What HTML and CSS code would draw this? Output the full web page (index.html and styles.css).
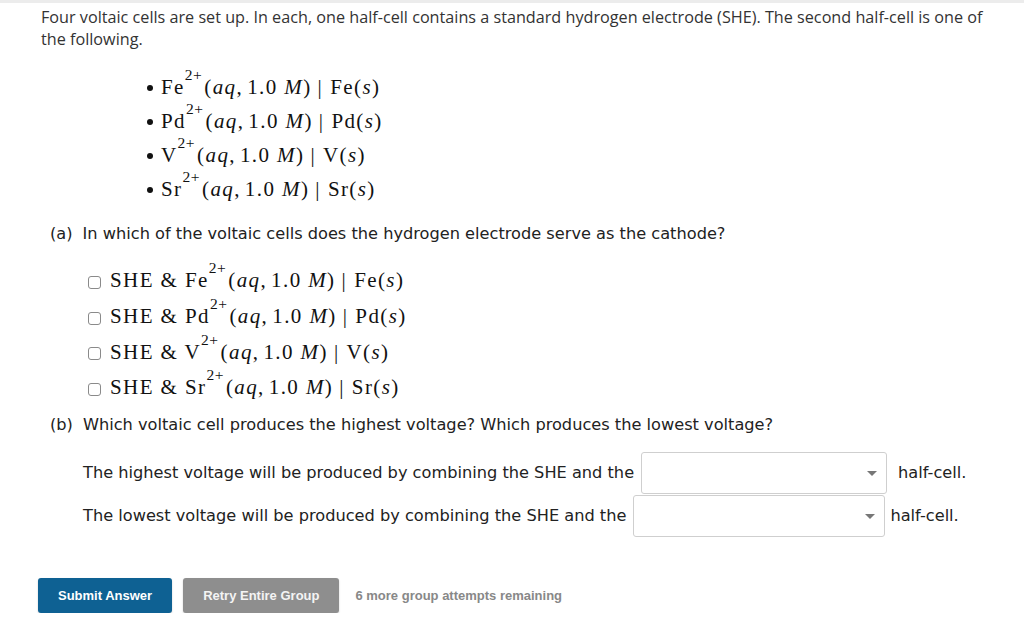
FILE: index.html
```html
<!DOCTYPE html>
<html>
<head>
<meta charset="utf-8">
<link rel="stylesheet" href="styles.css">
</head>
<body>
<div class="topbar"></div>
<div class="page">
  <p class="intro">Four voltaic cells are set up. In each, one half-cell contains a standard hydrogen electrode (SHE). The second half-cell is one of the following.</p>
  <ul class="cells">
    <li><span class="m">Fe<sup>2+</sup>(<i>aq</i>,<span class="sp"></span>1.0 <i>M</i>)<span class="bar">|</span>Fe(<i>s</i>)</span></li>
    <li><span class="m">Pd<sup>2+</sup>(<i>aq</i>,<span class="sp"></span>1.0 <i>M</i>)<span class="bar">|</span>Pd(<i>s</i>)</span></li>
    <li><span class="m">V<sup>2+</sup>(<i>aq</i>,<span class="sp"></span>1.0 <i>M</i>)<span class="bar">|</span>V(<i>s</i>)</span></li>
    <li><span class="m">Sr<sup>2+</sup>(<i>aq</i>,<span class="sp"></span>1.0 <i>M</i>)<span class="bar">|</span>Sr(<i>s</i>)</span></li>
  </ul>
  <div class="q"><span class="ql">(a)</span>In which of the voltaic cells does the hydrogen electrode serve as the cathode?</div>
  <div class="checks">
    <label class="chk"><span class="box"></span><span class="m">SHE &amp; Fe<sup>2+</sup>(<i>aq</i>,<span class="sp"></span>1.0 <i>M</i>)<span class="bar">|</span>Fe(<i>s</i>)</span></label>
    <label class="chk"><span class="box"></span><span class="m">SHE &amp; Pd<sup>2+</sup>(<i>aq</i>,<span class="sp"></span>1.0 <i>M</i>)<span class="bar">|</span>Pd(<i>s</i>)</span></label>
    <label class="chk"><span class="box"></span><span class="m">SHE &amp; V<sup>2+</sup>(<i>aq</i>,<span class="sp"></span>1.0 <i>M</i>)<span class="bar">|</span>V(<i>s</i>)</span></label>
    <label class="chk"><span class="box"></span><span class="m">SHE &amp; Sr<sup>2+</sup>(<i>aq</i>,<span class="sp"></span>1.0 <i>M</i>)<span class="bar">|</span>Sr(<i>s</i>)</span></label>
  </div>
  <div class="q qb"><span class="ql">(b)</span>Which voltaic cell produces the highest voltage? Which produces the lowest voltage?</div>
  <div class="answers">
    <div class="arow"><span>The highest voltage will be produced by combining the SHE and the</span><span class="sel sel1"><span class="caret"></span></span><span>half-cell.</span></div>
    <div class="arow"><span>The lowest voltage will be produced by combining the SHE and the</span><span class="sel sel2"><span class="caret"></span></span><span>half-cell.</span></div>
  </div>
  <div class="actions">
    <button class="btn submit">Submit Answer</button>
    <button class="btn retry">Retry Entire Group</button>
    <span class="remaining">6 more group attempts remaining</span>
  </div>
</div>
</body>
</html>
```

FILE: styles.css
```css
html, body {
  margin: 0;
  padding: 0;
  background: #fff;
}
.topbar {
  height: 3px;
  background: #ececec;
}
.page {
  padding: 0 0 0 41px;
}
.intro {
  margin: 3px 0 0 0;
  width: 960px;
  font-family: "Open Sans", sans-serif;
  font-size: 16.2px;
  line-height: 22px;
  color: #333;
}
.m {
  font-family: "Liberation Serif", "DejaVu Serif", serif;
  font-size: 21px;
  letter-spacing: 1.4px;
  color: #111;
  white-space: nowrap;
}
.m i {
  font-style: italic;
}
.m .sp {
  display: inline-block;
  width: 4px;
}
.m .bar {
  margin: 0 7px 0 6px;
}
.m sup {
  font-size: 15.5px;
  position: relative;
  top: -6px;
  vertical-align: super;
  line-height: 0;
  margin-right: 2px;
  letter-spacing: 0.5px;
}
.cells {
  list-style: none;
  margin: 20px 0 0 0;
  padding: 0 0 0 106px;
}
.cells li {
  height: 34px;
  display: flex;
  align-items: center;
  gap: 8px;
}
.cells li::before {
  content: "";
  width: 6px;
  height: 6px;
  border-radius: 50%;
  background: #111;
  margin-top: 2px;
}
.q {
  font-family: "DejaVu Sans", Verdana, sans-serif;
  font-size: 16.2px;
  color: #222;
  margin: 18px 0 0 9px;
  line-height: 20px;
}
.ql {
  margin-right: 10px;
}
.checks {
  margin: 19px 0 0 47px;
  display: flex;
  flex-direction: column;
}
.chk {
  height: 35.7px;
  display: flex;
  align-items: center;
  gap: 9px;
}
.box {
  width: 11px;
  height: 11px;
  border: 1px solid #8a8a8a;
  border-radius: 3px;
  margin-top: 3px;
}
.qb {
  margin-top: 9px;
}
.answers {
  margin: 17px 0 0 42px;
  font-family: "DejaVu Sans", Verdana, sans-serif;
  font-size: 16.2px;
  color: #222;
  display: flex;
  flex-direction: column;
  gap: 1px;
}
.arow {
  display: flex;
  align-items: center;
  gap: 7px;
}
.sel {
  position: relative;
  height: 40px;
  border: 1px solid #cfcfcf;
  border-radius: 3px;
  background: #fff;
}
.sel1 { width: 244px; margin-right: 4px; }
.sel2 { width: 250px; margin-right: -2px; }
.caret {
  position: absolute;
  right: 9px;
  top: 18px;
  width: 0;
  height: 0;
  border-left: 5px solid transparent;
  border-right: 5px solid transparent;
  border-top: 5px solid #777;
}
.actions {
  margin: 41px 0 0 -3px;
  display: flex;
  align-items: center;
  gap: 11px;
}
.btn {
  font-family: "Liberation Sans", Arial, sans-serif;
  font-weight: bold;
  font-size: 13px;
  color: #fff;
  border: none;
  border-radius: 3px;
  height: 35px;
  padding: 0 20px;
  white-space: nowrap;
  box-shadow: 0 1px 2px rgba(0,0,0,0.2);
}
.submit {
  background: #0e6193;
}
.retry {
  background: #8e8e8e;
  color: #f4f4f4;
}
.remaining {
  margin-left: 5px;
  font-family: "Liberation Sans", Arial, sans-serif;
  font-weight: bold;
  font-size: 13px;
  color: #888;
}
```
